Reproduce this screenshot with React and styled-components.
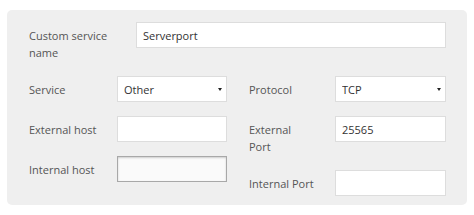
import React from 'react';
import styled, { createGlobalStyle } from 'styled-components';

const GlobalStyle = createGlobalStyle`
    body {
        margin: 0;
        background: #ffffff;
        font-family: 'Open Sans', 'Liberation Sans', sans-serif;
    }
`;

const App = () => {
    return (
        <>
            <GlobalStyle />
            <Panel>
                <FirstRow>
                    <Label width="107px" pad="15px">
                        Custom service name
                    </Label>
                    <Input defaultValue="Serverport" />
                </FirstRow>
                <Columns>
                    <Column width="198px">
                        <Row>
                            <Label width="88px">Service</Label>
                            <SelectBox>
                                <Select defaultValue="Other">
                                    <option>Other</option>
                                    <option>HTTP</option>
                                    <option>FTP</option>
                                </Select>
                                <Caret />
                            </SelectBox>
                        </Row>
                        <Row>
                            <Label width="88px">External host</Label>
                            <Input />
                        </Row>
                        <Row>
                            <Label width="88px">Internal host</Label>
                            <Input focused />
                        </Row>
                    </Column>
                    <Column width="197px">
                        <Row>
                            <Label width="86px" pad="20px">
                                Protocol
                            </Label>
                            <SelectBox>
                                <Select defaultValue="TCP">
                                    <option>TCP</option>
                                    <option>UDP</option>
                                </Select>
                                <Caret />
                            </SelectBox>
                        </Row>
                        <Row>
                            <Label width="86px" pad="20px">
                                External Port
                            </Label>
                            <Input defaultValue="25565" />
                        </Row>
                        <Row>
                            <Label width="86px" pad="20px">
                                Internal Port
                            </Label>
                            <Input />
                        </Row>
                    </Column>
                </Columns>
            </Panel>
        </>
    );
};

export default App;

const Panel = styled.div`
    box-sizing: border-box;
    width: 460px;
    height: 195px;
    margin: 10px 0 0 7px;
    padding: 12px 21px 0 22px;
    background: #efefef;
    border-radius: 5px;
    display: flex;
    flex-direction: column;
    gap: 14px;
`;

const FirstRow = styled.div`
    display: flex;
    align-items: flex-start;
`;

const Columns = styled.div`
    display: flex;
    gap: 22px;
`;

const Column = styled.div`
    display: flex;
    flex-direction: column;
    gap: 14px;
    flex: 0 0 ${(p) => p.width};
    width: ${(p) => p.width};
    min-width: 0;
`;

const Row = styled.div`
    display: flex;
    align-items: flex-start;
    min-width: 0;
`;

const Label = styled.div`
    box-sizing: border-box;
    flex: 0 0 ${(p) => p.width};
    width: ${(p) => p.width};
    padding: 5px ${(p) => p.pad || '0px'} 1px 0;
    font-size: 11px;
    line-height: 17px;
    color: #555555;
`;

const Input = styled.input`
    box-sizing: border-box;
    flex: 1 1 0;
    width: 0;
    min-width: 0;
    height: 26px;
    margin: 0;
    padding: 0 6px;
    border: 1px solid ${(p) => (p.focused ? '#a8a8a8' : '#dddddd')};
    border-radius: 0;
    background: ${(p) => (p.focused ? '#fafafa' : '#ffffff')};
    box-shadow: ${(p) => (p.focused ? 'inset 0 1px 2px rgba(0, 0, 0, 0.18)' : 'none')};
    font-family: 'Open Sans', 'Liberation Sans', sans-serif;
    font-size: 11px;
    color: #333333;
    outline: none;
`;

const SelectBox = styled.div`
    position: relative;
    flex: 1 1 0;
    min-width: 0;
    height: 26px;
`;

const Select = styled.select`
    box-sizing: border-box;
    width: 100%;
    height: 26px;
    margin: 0;
    padding: 0 6px;
    border: 1px solid #dddddd;
    border-radius: 0;
    background: #ffffff;
    appearance: none;
    -webkit-appearance: none;
    font-family: 'Open Sans', 'Liberation Sans', sans-serif;
    font-size: 11px;
    color: #333333;
    outline: none;
`;

const Caret = styled.span`
    position: absolute;
    right: 5px;
    top: 12px;
    width: 0;
    height: 0;
    border-left: 2px solid transparent;
    border-right: 2px solid transparent;
    border-top: 3px solid #222222;
    pointer-events: none;
`;
